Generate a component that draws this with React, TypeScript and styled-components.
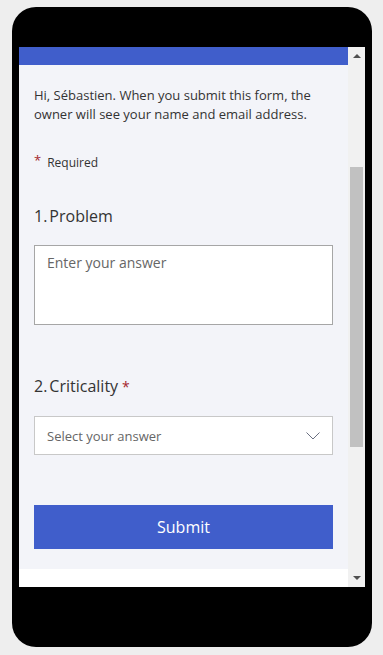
import React from "react";
import styled, { createGlobalStyle } from "styled-components";

const Global = createGlobalStyle`
  html, body { margin: 0; padding: 0; background: #eeeeee; }
  body { font-family: "Open Sans", "Noto Sans", sans-serif; }
  * { box-sizing: border-box; }
`;

const Stage = styled.div`
  padding: 7px 11px 8px 12px;
`;

const Phone = styled.div`
  width: 360px;
  height: 640px;
  background: #000;
  border-radius: 24px;
  padding: 40px 7px 60px 7px;
`;

const Screen = styled.div`
  width: 346px;
  height: 540px;
  display: flex;
  background: #fff;
`;

const Viewport = styled.div`
  flex: 1;
  overflow: hidden;
  display: flex;
  flex-direction: column;
  background: #fff;
`;

const ScrollBar = styled.div`
  width: 17px;
  flex: none;
  display: flex;
  flex-direction: column;
  background: #f1f1f1;
`;

const ScrollButton = styled.div<{ $top: number }>`
  height: 17px;
  flex: none;
  display: flex;
  justify-content: center;
  align-items: flex-start;
  padding-top: ${(p) => p.$top}px;
`;

const Track = styled.div`
  flex: 1;
  display: flex;
  flex-direction: column;
  padding: 0 2px;
`;

const Thumb = styled.div`
  background: #c1c1c1;
  flex: none;
`;

const Header = styled.div`
  height: 18px;
  flex: none;
  background: #405ecb;
`;

const Body = styled.div`
  background: #f3f4f9;
  padding: 21px 15px 20px 15px;
  display: flex;
  flex-direction: column;
  color: #333;
  flex: none;
`;

const Intro = styled.p`
  margin: 0;
  font-size: 13px;
  line-height: 19px;
  width: 299px;
`;

const Required = styled.div`
  margin-top: 29px;
  font-size: 12px;
  line-height: 19px;
  display: flex;
  align-items: baseline;
  gap: 6px;
`;

const Star = styled.span<{ $size?: number; $raise?: number }>`
  color: #a4262c;
  font-size: ${(p) => p.$size ?? 13}px;
  position: relative;
  top: ${(p) => -(p.$raise ?? 0)}px;
`;

const QuestionTitle = styled.div<{ $top: number }>`
  margin-top: ${(p) => p.$top}px;
  font-size: 16px;
  line-height: 24px;
  display: flex;
  align-items: baseline;
  gap: 4px;
`;

const Num = styled.span`
  margin-right: 2px;
`;

const TextArea = styled.textarea`
  margin-top: 17px;
  width: 299px;
  height: 80px;
  border: 1px solid #a6a6a6;
  background: #fff;
  padding: 7px 12px 5px;
  font-family: "Open Sans", "Noto Sans", sans-serif;
  font-size: 14px;
  line-height: 20px;
  color: #333;
  resize: none;
  outline: none;
  &::placeholder { color: #666; }
`;

const Select = styled.div`
  margin-top: 17px;
  width: 299px;
  height: 39px;
  border: 1px solid #c8c8c8;
  background: #fff;
  display: flex;
  align-items: center;
  justify-content: space-between;
  padding: 0 12px 0 12px;
  font-size: 13px;
  color: #666;
`;

const SubmitButton = styled.button`
  margin-top: 50px;
  width: 299px;
  height: 44px;
  border: none;
  background: #405ecb;
  color: #fff;
  font-family: "Open Sans", "Noto Sans", sans-serif;
  font-size: 16px;
`;

const TRACK = 506;
const VISIBLE = 540;
const TOTAL = 976;
const SCROLL_TOP = 199;
const thumbHeight = Math.round((TRACK * VISIBLE) / TOTAL);
const thumbTop = Math.round(((TRACK - thumbHeight) * SCROLL_TOP) / (TOTAL - VISIBLE));

function Arrow({ up }: { up: boolean }) {
  return (
    <svg width="8" height="4" viewBox="0 0 8 4">
      <polygon points={up ? "0,4 4,0 8,4" : "0,0 8,0 4,4"} fill="#505050" />
    </svg>
  );
}

export default function App() {
  return (
    <>
      <Global />
      <Stage>
        <Phone>
          <Screen>
            <Viewport>
              <Header />
              <Body>
                <Intro>
                  Hi, Sébastien. When you submit this form, the owner will see your name and email address.
                </Intro>
                <Required>
                  <Star $raise={2}>*</Star>
                  <span>Required</span>
                </Required>
                <QuestionTitle $top={32}>
                  <span><Num>1.</Num>Problem</span>
                </QuestionTitle>
                <TextArea placeholder="Enter your answer" />
                <QuestionTitle $top={49}>
                  <span><Num>2.</Num>Criticality</span>
                  <Star $size={14}>*</Star>
                </QuestionTitle>
                <Select>
                  <span>Select your answer</span>
                  <svg width="14" height="8" viewBox="0 0 14 8">
                    <polyline points="0.5,0.5 7,7 13.5,0.5" fill="none" stroke="#6a6f80" strokeWidth="1" />
                  </svg>
                </Select>
                <SubmitButton>Submit</SubmitButton>
              </Body>
            </Viewport>
            <ScrollBar>
              <ScrollButton $top={7}><Arrow up /></ScrollButton>
              <Track>
                <Thumb style={{ marginTop: thumbTop, height: thumbHeight }} />
              </Track>
              <ScrollButton $top={6}><Arrow up={false} /></ScrollButton>
            </ScrollBar>
          </Screen>
        </Phone>
      </Stage>
    </>
  );
}
